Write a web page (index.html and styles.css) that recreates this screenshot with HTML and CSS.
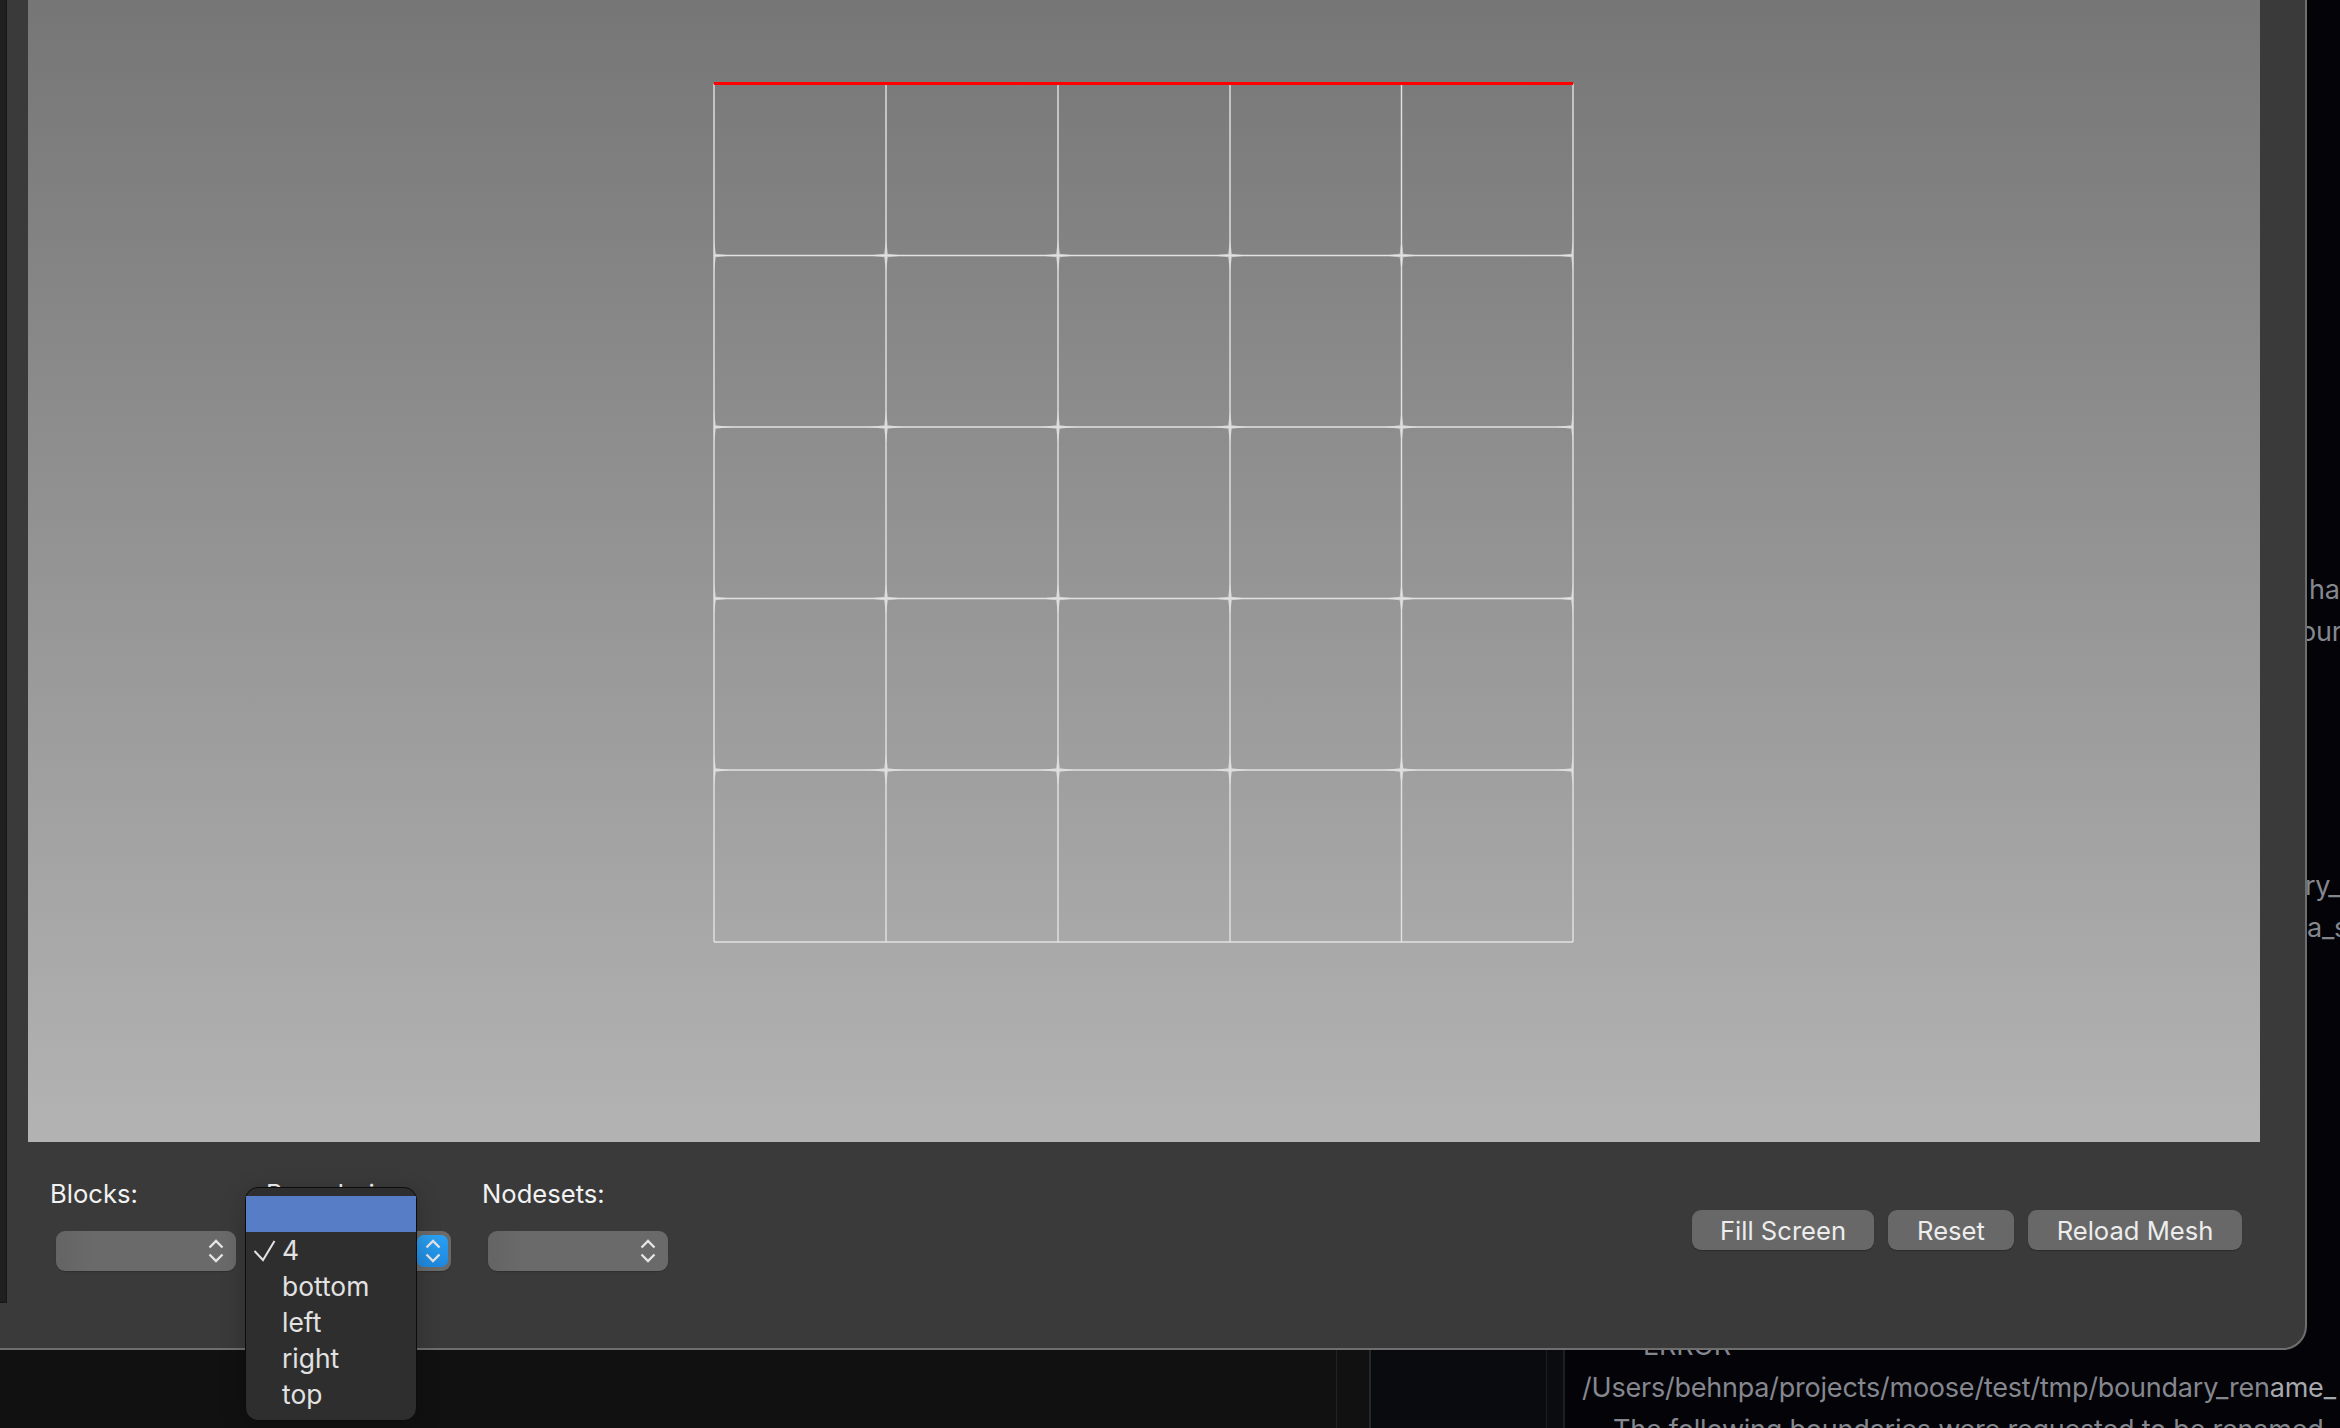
FILE: index.html
```html
<!DOCTYPE html>
<html lang="en">
<head>
<meta charset="utf-8">
<title>Mesh viewer</title>
<link rel="stylesheet" href="styles.css">
</head>
<body>
<div class="desktop">
  <div class="panes">
    <div class="pane pane-a"></div>
    <div class="pane pane-b"></div>
    <div class="pane pane-c"></div>
    <div class="pane pane-d"></div>
    <div class="pane terminal">
      <div class="line far first">ha</div>
      <div class="line far our">our</div>
      <div class="line far gap-a">ary_</div>
      <div class="line far a-s">a_s</div>
      <div class="line error">ERROR</div>
      <div class="line">/Users/behnpa/projects/moose/test/tmp/boundary_ren<span class="bright">ame_</span></div>
      <div class="line indent">The following boundaries were requested to be renamed</div>
    </div>
  </div>

  <div class="window">
    <div class="sidebar"></div>
    <div class="canvas">
      <svg class="mesh" viewBox="28 0 2232 1142" width="2232" height="1142" aria-hidden="true">
        <defs>
          <polygon id="spark" points="-17,0 -1.8,-1.8 0,-16 1.8,-1.8 17,0 1.8,1.800 0,16 -1.8,1.800"/>
          <clipPath id="meshclip"><rect x="714" y="84" width="859" height="858"/></clipPath>
        </defs>
        <g class="sparks" clip-path="url(#meshclip)">
          <use href="#spark" x="714" y="255.5"/><use href="#spark" x="886" y="255.5"/><use href="#spark" x="1058" y="255.5"/><use href="#spark" x="1230" y="255.5"/><use href="#spark" x="1401.5" y="255.5"/><use href="#spark" x="1573" y="255.5"/>
          <use href="#spark" x="714" y="427"/><use href="#spark" x="886" y="427"/><use href="#spark" x="1058" y="427"/><use href="#spark" x="1230" y="427"/><use href="#spark" x="1401.5" y="427"/><use href="#spark" x="1573" y="427"/>
          <use href="#spark" x="714" y="598.5"/><use href="#spark" x="886" y="598.5"/><use href="#spark" x="1058" y="598.5"/><use href="#spark" x="1230" y="598.5"/><use href="#spark" x="1401.5" y="598.5"/><use href="#spark" x="1573" y="598.5"/>
          <use href="#spark" x="714" y="770"/><use href="#spark" x="886" y="770"/><use href="#spark" x="1058" y="770"/><use href="#spark" x="1230" y="770"/><use href="#spark" x="1401.5" y="770"/><use href="#spark" x="1573" y="770"/>
        </g>
        <g class="edges">
          <line x1="714" y1="84" x2="714" y2="942"/>
          <line x1="886" y1="84" x2="886" y2="942"/>
          <line x1="1058" y1="84" x2="1058" y2="942"/>
          <line x1="1230" y1="84" x2="1230" y2="942"/>
          <line x1="1401.5" y1="84" x2="1401.5" y2="942"/>
          <line x1="1573" y1="84" x2="1573" y2="942"/>
          <line x1="714" y1="255.5" x2="1573" y2="255.5"/>
          <line x1="714" y1="427" x2="1573" y2="427"/>
          <line x1="714" y1="598.5" x2="1573" y2="598.5"/>
          <line x1="714" y1="770" x2="1573" y2="770"/>
          <line x1="714" y1="942" x2="1573" y2="942"/>
        </g>
        <line class="boundary" x1="714" y1="83.5" x2="1573" y2="83.5"/>
      </svg>
    </div>
    <div class="controls">
      <div class="fields">
        <div class="field">
          <div class="label">Blocks:</div>
          <div class="select">
            <svg class="chev" viewBox="0 0 16 24" width="16" height="24"><path d="M1.500 8.500 8 2l6.500 6.500M1.500 15.500 8 22l6.500-6.500"/></svg>
          </div>
        </div>
        <div class="field">
          <div class="label">Boundaries:</div>
          <div class="select open">
            <div class="select-btn">
              <svg class="chev" viewBox="0 0 16 24" width="16" height="24"><path d="M1.500 8.500 8 2l6.500 6.500M1.500 15.500 8 22l6.500-6.500"/></svg>
            </div>
          </div>
        </div>
        <div class="field">
          <div class="label">Nodesets:</div>
          <div class="select">
            <svg class="chev" viewBox="0 0 16 24" width="16" height="24"><path d="M1.500 8.500 8 2l6.500 6.500M1.500 15.500 8 22l6.500-6.500"/></svg>
          </div>
        </div>
      </div>
      <div class="buttons">
        <button class="btn fill">Fill Screen</button>
        <button class="btn reset">Reset</button>
        <button class="btn reload">Reload Mesh</button>
      </div>
    </div>
    <div class="menu">
      <div class="menu-item active"></div>
      <div class="menu-item">
        <svg class="check" viewBox="0 0 24 24" width="24" height="24"><path d="M1.500 13 10 22 21.500 3"/></svg>
        4
      </div>
      <div class="menu-item">bottom</div>
      <div class="menu-item">left</div>
      <div class="menu-item">right</div>
      <div class="menu-item">top</div>
    </div>
  </div>
</div>
</body>
</html>
```

FILE: styles.css
```css
* { box-sizing: border-box; }
html, body { margin: 0; padding: 0; background: #030308; }
body { font-family: "Inter", "Liberation Sans", sans-serif; }

.desktop {
  position: relative;
  width: 2340px;
  height: 1428px;
  overflow: hidden;
}

.panes { display: flex; height: 100%; }
.pane { height: 100%; }
.pane-a { width: 1337px; background: #111111; border-right: 1px solid #222222; }
.pane-b { width: 34px; background: #111111; border-right: 2px solid #26272a; }
.pane-c { width: 176px; background: #0a0b0e; border-right: 1px solid #1c1d20; }
.pane-d { width: 18px; background: #0b0c0f; border-right: 2px solid #1e1f22; }

.terminal {
  flex: 1;
  min-width: 0;
  padding: 569px 0 0 17px;
  overflow: hidden;
  background: #030308;
  color: #85878f;
  font-size: 27px;
  letter-spacing: -0.22px;
  line-height: 42px;
  white-space: nowrap;
}
.line { height: 42px; }
.far { margin-left: 727px; }
.our { margin-left: 718px; }
.gap-a { margin-top: 212px; margin-left: 708px; }
.a-s { margin-left: 725px; }
.error { margin-top: 376px; margin-left: 61px; }
.indent { margin-left: 31px; }
.bright { color: #a6a8ae; }

.window {
  position: absolute;
  left: 0;
  top: 0;
  width: 2307px;
  height: 1350px;
  background: #3a3a3a;
  border-right: 2px solid #6e6e6e;
  border-bottom: 2px solid #6e6e6e;
  border-bottom-right-radius: 24px;
  display: flex;
  flex-direction: column;
}

.sidebar {
  position: absolute;
  left: 0;
  top: 0;
  width: 7px;
  height: 1303px;
  background: #1f1f1f;
  border-right: 1px solid #161616;
  border-bottom: 1px solid #161616;
}

.canvas {
  height: 1142px;
  margin: 0 45px 0 28px;
  background: linear-gradient(#767676, #b3b3b3);
}
.mesh { display: block; }
.edges line { stroke: #e2e2e2; stroke-width: 1.4; }
.sparks use { fill: #ffffff; opacity: 0.55; }
.boundary { stroke: #ff0000; stroke-width: 3; }

.controls {
  flex: 1;
  display: flex;
  justify-content: space-between;
  align-items: flex-start;
  padding: 36px 63px 0 50px;
  color: #f2f2f2;
  font-size: 25.6px;
}

.fields { display: flex; gap: 30px; }
.field { width: 186px; }
.label { height: 32px; line-height: 32px; white-space: nowrap; margin-bottom: 21px; }

.select {
  display: flex;
  align-items: center;
  justify-content: flex-end;
  width: 180px;
  height: 40px;
  margin-left: 6px;
  padding-right: 12px;
  border-radius: 9px;
  background: linear-gradient(90deg, #646464, #6a6a6a 20%);
  box-shadow: 0 1px 1px rgba(0, 0, 0, 0.2);
}
.select.open { padding-right: 3px; margin-left: 5px; }
.select-btn {
  display: flex;
  align-items: center;
  justify-content: center;
  width: 31px;
  height: 32px;
  border-radius: 7px;
  background: linear-gradient(#2aa0f2, #1f88de);
}
.chev { display: block; fill: none; stroke: #e4e4e4; stroke-width: 2.4; }

.buttons { display: flex; gap: 14px; margin-top: 32px; }
.btn {
  height: 40px;
  padding: 0;
  border: 0;
  border-radius: 9px;
  background: #686868;
  color: #ededed;
  font: inherit;
  box-shadow: 0 1px 1px rgba(0, 0, 0, 0.25);
}
.fill { width: 182px; }
.reset { width: 126px; }
.reload { width: 214px; }

.menu {
  position: absolute;
  left: 245px;
  top: 1187px;
  width: 172px;
  height: 234px;
  padding-top: 8px;
  background: #2e2e2e;
  border: 1px solid #0c0c0c;
  border-radius: 13px;
  color: #e2e2e2;
  font-size: 26.4px;
  box-shadow: 0 6px 24px rgba(0, 0, 0, 0.22);
}
.menu-item {
  position: relative;
  height: 36px;
  line-height: 36px;
  padding-left: 36px;
}
.menu-item.active { background: #577dc6; }
.check {
  position: absolute;
  left: 7px;
  top: 6px;
  fill: none;
  stroke: #e2e2e2;
  stroke-width: 2;
}
```
